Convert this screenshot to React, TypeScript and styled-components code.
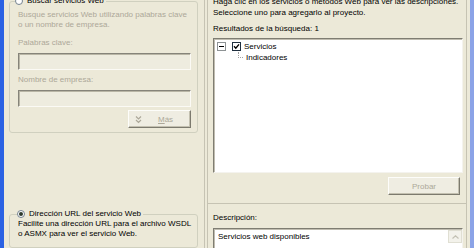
import React from 'react';
import styled, { createGlobalStyle } from 'styled-components';

const GlobalStyle = createGlobalStyle`
  html, body {
    margin: 0;
    padding: 0;
  }
  body {
    width: 474px;
    height: 248px;
    overflow: hidden;
    background: #ece9d8;
    font-family: "Liberation Sans", Arial, sans-serif;
    font-size: 8px;
    color: #000;
  }
`;

const Frame = styled.div`
  display: flex;
  box-sizing: border-box;
  width: 474px;
  height: 248px;
  overflow: hidden;
  background: #ece9d8;
  border-left: 4px solid #2b62e3;
  border-right: 4px solid #8ba3e7;
`;

const LeftPane = styled.div`
  flex: none;
  width: 200px;
  box-sizing: border-box;
  margin-top: -4px;
  padding: 0 6px 0 5px;
  display: flex;
  flex-direction: column;
`;

const Group = styled.fieldset`
  margin: 0;
  padding: 4px 6px 4px 8px;
  border: 1px solid #d0d0bf;
  border-radius: 3px;
  min-width: 0;
`;

const UrlGroup = styled(Group)`
  margin-top: 76px;
  padding-top: 0;
  height: 60px;
`;

const Legend = styled.legend<{ $shift: number }>`
  margin-left: ${p => p.$shift}px;
  padding: 0 2px 0 0;
  height: 10px;
  line-height: 10px;
`;

const LegendRow = styled.span<{ $disabled?: boolean }>`
  display: inline-flex;
  align-items: center;
  gap: 4px;
  color: ${p => (p.$disabled ? '#000' : '#000')};
`;

const Radio = styled.span<{ $checked?: boolean }>`
  box-sizing: border-box;
  width: 8px;
  height: 8px;
  border-radius: 50%;
  border: 1px solid #74828f;
  background: #fff;
  display: flex;
  align-items: center;
  justify-content: center;

  &::after {
    content: '';
    display: ${p => (p.$checked ? 'block' : 'none')};
    width: 4px;
    height: 4px;
    border-radius: 50%;
    background: #2d3a2d;
  }
`;

const Text = styled.div<{ $disabled?: boolean; $gap?: number }>`
  line-height: 10px;
  margin-top: ${p => p.$gap ?? 0}px;
  color: ${p => (p.$disabled ? '#aca899' : '#000')};
  white-space: nowrap;
`;

const TextBox = styled.div`
  box-sizing: border-box;
  height: 17px;
  margin-top: 5px;
  background: #eeecdf;
  border: 1px solid;
  border-color: #86847a #fbfaf5 #fbfaf5 #86847a;
  box-shadow: inset 1px 1px 0 #b9b6a6;
`;

const ButtonRow = styled.div<{ $gap: number; $inset?: number }>`
  display: flex;
  justify-content: flex-end;
  margin-top: ${p => p.$gap}px;
  padding-right: ${p => p.$inset ?? 0}px;
`;

const Button = styled.button<{ $w: number }>`
  box-sizing: border-box;
  width: ${p => p.$w}px;
  height: 18px;
  padding: 0;
  display: flex;
  align-items: center;
  justify-content: center;
  font: inherit;
  color: #aca899;
  background: #efede2;
  border: 1px solid;
  border-color: #fdfdfa #7c7a6e #7c7a6e #fdfdfa;
  box-shadow: inset -1px -1px 0 #c3c0b0;
`;

const MoreButton = styled(Button)`
  justify-content: flex-start;
  padding-left: 6px;
  gap: 16px;
`;

const RightPane = styled.div`
  flex: 1;
  min-width: 0;
  margin-right: 3px;
  display: flex;
  flex-direction: column;
  border-left: 4px double #c6c3b3;
  border-right: 1px solid #c6c3b3;
`;

const ResultsSection = styled.div`
  margin-top: -4px;
  padding: 0 3px 8px 5px;
  border-bottom: 1px solid #c6c3b3;
`;

const Hint = styled.div`
  line-height: 11px;
  white-space: nowrap;
`;

const Tree = styled.div`
  box-sizing: border-box;
  height: 135px;
  margin-top: 4px;
  padding: 2px 0 0 3px;
  background: #fff;
  border: 1px solid;
  border-color: #7f7d72 #f4f3ee #f4f3ee #7f7d72;
  box-shadow: inset 1px 1px 0 #c0bdb0;
`;

const TreeRow = styled.div<{ $indent?: number }>`
  display: flex;
  align-items: center;
  height: 11px;
  padding-left: ${p => p.$indent ?? 0}px;
`;

const Expander = styled.svg`
  flex: none;
  width: 9px;
  height: 9px;
`;

const Check = styled.svg`
  flex: none;
  width: 9px;
  height: 9px;
  margin-left: 6px;
`;

const NodeLabel = styled.span`
  margin-left: 2px;
  padding: 0 1px;
  line-height: 10px;
  white-space: nowrap;
`;

const Connector = styled.span`
  align-self: flex-start;
  flex: none;
  width: 4px;
  height: 5px;
  border-left: 1px dotted #a3a3a3;
  border-bottom: 1px dotted #a3a3a3;
`;

const DescriptionSection = styled.div`
  padding: 9px 3px 0 5px;
`;

const DescriptionBox = styled.div`
  box-sizing: border-box;
  height: 40px;
  margin-top: 5px;
  display: flex;
  align-items: flex-start;
  background: #fff;
  border: 1px solid;
  border-color: #7f7d72 #f4f3ee #f4f3ee #7f7d72;
  box-shadow: inset 1px 1px 0 #c0bdb0;
`;

const DescriptionText = styled.div`
  flex: 1;
  padding: 3px 0 0 4px;
  line-height: 10px;
`;

const ScrollUp = styled.div`
  box-sizing: border-box;
  width: 14px;
  height: 13px;
  margin: 1px 0 0;
  display: flex;
  align-items: center;
  justify-content: center;
  background: #f3f2eb;
  border: 1px solid #e0dfd3;
`;

const DoubleChevron = () => (
  <svg width="7" height="9" viewBox="0 0 7 9">
    <path d="M1 1.5 L3.5 4 L6 1.5 M1 5 L3.5 7.5 L6 5" fill="none" stroke="#aca899" strokeWidth="1.2" />
  </svg>
);

export default function App() {
  return (
    <>
      <GlobalStyle />
      <Frame>
        <LeftPane>
          <Group>
            <Legend $shift={-3}>
              <LegendRow>
                <Radio />
                <span>Buscar servicios Web</span>
              </LegendRow>
            </Legend>
            <Text $disabled>Busque servicios Web utilizando palabras clave</Text>
            <Text $disabled>o un nombre de empresa.</Text>
            <Text $disabled $gap={8}>Palabras clave:</Text>
            <TextBox />
            <Text $disabled $gap={5}>Nombre de empresa:</Text>
            <TextBox />
            <ButtonRow $gap={3}>
              <MoreButton $w={63} disabled>
                <DoubleChevron />
                <span>
                  <u>M</u>ás
                </span>
              </MoreButton>
            </ButtonRow>
          </Group>
          <UrlGroup>
            <Legend $shift={-1}>
              <LegendRow>
                <Radio $checked />
                <span>Dirección URL del servicio Web</span>
              </LegendRow>
            </Legend>
            <Text>Facilite una dirección URL para el archivo WSDL</Text>
            <Text>o ASMX para ver el servicio Web.</Text>
          </UrlGroup>
        </LeftPane>

        <RightPane>
          <ResultsSection>
            <Hint>Haga clic en los servicios o métodos Web para ver las descripciones.</Hint>
            <Hint>Seleccione uno para agregarlo al proyecto.</Hint>
            <Text $gap={6}>Resultados de la búsqueda: 1</Text>
            <Tree>
              <TreeRow>
                <Expander viewBox="0 0 9 9">
                  <rect x="0.5" y="0.5" width="8" height="8" fill="#fff" stroke="#8d9294" />
                  <path d="M2 4.5 H7" stroke="#000" />
                </Expander>
                <Check viewBox="0 0 9 9">
                  <rect x="0.5" y="0.5" width="8" height="8" fill="#fff" stroke="#1f2f3f" />
                  <path d="M2 4.3 L3.8 6.2 L7 2.4" fill="none" stroke="#000" strokeWidth="1.4" />
                </Check>
                <NodeLabel>Servicios</NodeLabel>
              </TreeRow>
              <TreeRow $indent={21}>
                <Connector />
                <NodeLabel>Indicadores</NodeLabel>
              </TreeRow>
            </Tree>
            <ButtonRow $gap={4} $inset={3}>
              <Button $w={72} disabled>
                Probar
              </Button>
            </ButtonRow>
          </ResultsSection>

          <DescriptionSection>
            <Text>Descripción:</Text>
            <DescriptionBox>
              <DescriptionText>Servicios web disponibles</DescriptionText>
              <ScrollUp>
                <svg width="7" height="4" viewBox="0 0 7 4">
                  <path d="M0.5 3.5 L3.5 0.8 L6.5 3.5" fill="none" stroke="#c3c1b4" strokeWidth="1.2" />
                </svg>
              </ScrollUp>
            </DescriptionBox>
          </DescriptionSection>
        </RightPane>
      </Frame>
    </>
  );
}
